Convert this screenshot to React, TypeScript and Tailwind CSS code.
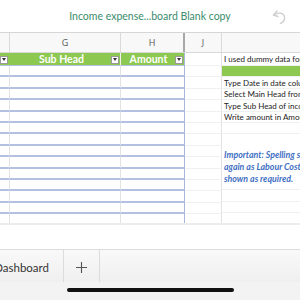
import React from "react";

const BLUE = "border-[#b3c0e2]";

function Drop() {
  return (
    <div className="w-[8px] h-[8px] bg-white border border-[#9a9a9a] flex items-center justify-center">
      <div className="w-0 h-0 border-l-[2px] border-r-[2px] border-t-[3px] border-l-transparent border-r-transparent border-t-[#333]" />
    </div>
  );
}

const kText: string[] = [
  "green",
  "Type Date in date column",
  "Select Main Head from list",
  "Type Sub Head of income",
  "Write amount in Amount",
];

function DataRow() {
  return (
    <div className="flex h-[11.4px] shrink-0">
      <div className={`w-[10px] border-r border-r-[#e2e2e2] border-b-2 ${BLUE}`} />
      <div className={`w-[111px] border-r border-r-[#e2e2e2] border-b-2 ${BLUE}`} />
      <div className={`w-[64px] border-r border-r-[#a9b6de] border-b-2 ${BLUE}`} />
      <div className="w-[37px] border-r border-r-[#e2e2e2] border-b border-b-[#f0f0f0]" />
    </div>
  );
}

export default function App() {
  const rows = Array.from({ length: 14 }, (_, i) => i);
  return (
    <div
      className="w-[300px] h-[300px] overflow-hidden bg-white flex flex-col"
      style={{ fontFamily: "Lato, 'Liberation Sans', sans-serif" }}
    >
      {/* title bar */}
      <div className="h-[32px] shrink-0 grid grid-cols-[1fr_auto_1fr] items-center">
        <div />
        <div className="text-[10.5px] text-[#3a8c6c] pt-[1px]">
          Income expense...board Blank copy
        </div>
        <div className="flex justify-end pr-[12px]">
          <svg width="17" height="17" viewBox="0 0 17 17" fill="none" stroke="#cfcfcf" strokeWidth="1.4" strokeLinecap="round" strokeLinejoin="round">
            <path d="M6 3 L2.5 7 L7 8.5" />
            <path d="M2.5 7 C7 4 13 4.5 13.5 9 C14 12.5 11.5 14.5 9.5 15.5" />
          </svg>
        </div>
      </div>

      {/* sheet */}
      <div className="h-[191px] shrink-0 flex flex-col overflow-hidden border-t border-[#d6d6d6]">
        {/* column headers */}
        <div className="h-[20px] shrink-0 flex bg-[#f8f8f8] border-b border-[#d8d8d8] text-[9px] text-[#555]" style={{ fontFamily: "'Open Sans', sans-serif" }}>
          <div className="w-[10px] border-r border-[#dadada]" />
          <div className="w-[111px] border-r border-[#dadada] flex items-center justify-center">G</div>
          <div className="w-[64px] border-r-2 border-[#a8a8a8] flex items-center justify-center">H</div>
          <div className="w-[37px] border-r border-[#dadada] flex items-center justify-center">J</div>
          <div className="flex-1" />
        </div>

        <div className="flex flex-1 min-h-0">
          {/* left grid */}
          <div className="flex flex-col shrink-0">
            <div className="flex h-[13px] shrink-0">
              <div className={`w-[10px] bg-[#8dc850] border-b ${BLUE} flex items-center justify-end pr-[2px] pt-[1px]`}>
                <Drop />
              </div>
              <div className={`w-[111px] bg-[#8dc850] border-r border-r-[#f2f2f2] border-b ${BLUE} flex items-center`}>
                <span className="flex-1 text-center text-white font-bold text-[10.5px] leading-none pl-[2px]">Sub Head</span>
                <div className="pr-[1px] pt-[1px]"><Drop /></div>
              </div>
              <div className={`w-[64px] bg-[#8dc850] border-r border-r-[#a9b6de] border-b ${BLUE} flex items-center`}>
                <span className="flex-1 text-center text-white font-bold text-[10.5px] leading-none pl-[1px]">Amount</span>
                <div className="pr-[1px] pt-[1px]"><Drop /></div>
              </div>
              <div className="w-[37px] border-r border-r-[#e2e2e2] border-b border-b-[#f0f0f0]" />
            </div>
            {rows.map((i) => (
              <DataRow key={i} />
            ))}
          </div>

          {/* K column */}
          <div className="flex-1 flex flex-col text-[8px] text-[#222] whitespace-nowrap overflow-hidden">
            <div className="h-[13px] shrink-0 flex items-center pl-[2px] border-b border-[#f0f0f0]">I used dummy data for testing</div>
            {kText.map((t, idx) =>
              t === "green" ? (
                <div key={idx} className="h-[11.4px] shrink-0 bg-[#8dc850] border-b border-[#f0f0f0]" />
              ) : (
                <div key={idx} className="h-[11.4px] shrink-0 flex items-center pl-[2px] pt-[1px] border-b border-[#f0f0f0]">{t}</div>
              )
            )}
            <div className="h-[11.4px] shrink-0 border-b border-[#f0f0f0]" />
            <div className="h-[56px] shrink-0 pl-[2px] pt-[15px] text-[#3f6fc3] italic font-bold text-[8.8px] leading-[11.6px] border-b border-[#f0f0f0]">
              <div>Important: Spelling should be same</div>
              <div>again as Labour Cost is written</div>
              <div>shown as required.</div>
            </div>
            <div className="h-[11.4px] shrink-0 border-b border-[#f0f0f0]" />
            <div className="h-[11.4px] shrink-0 border-b border-[#f0f0f0]" />
            <div className="h-[11.4px] shrink-0 border-b border-[#f0f0f0]" />
          </div>
        </div>
      </div>

      <div className="h-[2px] shrink-0 bg-[#ececec]" />
      <div className="h-[24px] shrink-0 bg-white" />

      {/* tab bar */}
      <div className="h-[33px] shrink-0 flex bg-gradient-to-b from-[#f9f9f9] to-[#efefef] border-t border-[#dcdcdc]">
        <div className="w-[63px] flex items-center justify-end pr-[15px] pt-[3px] text-[11.5px] text-[#333] overflow-visible whitespace-nowrap">
          <span className="-mr-[1px]">Dashboard</span>
        </div>
        <div className="w-[37px] border-l border-r border-[#dcdcdc] flex items-center justify-center pt-[3px]">
          <svg width="11" height="11" viewBox="0 0 11 11" stroke="#555" strokeWidth="1.1">
            <path d="M5.5 0 V11 M0 5.5 H11" />
          </svg>
        </div>
        <div className="flex-1" />
      </div>

      {/* home indicator */}
      <div className="flex-1 bg-[#f3f3f3] flex justify-center pt-[6px]">
        <div className="w-[167px] h-[4px] rounded-full bg-[#111]" />
      </div>
    </div>
  );
}
